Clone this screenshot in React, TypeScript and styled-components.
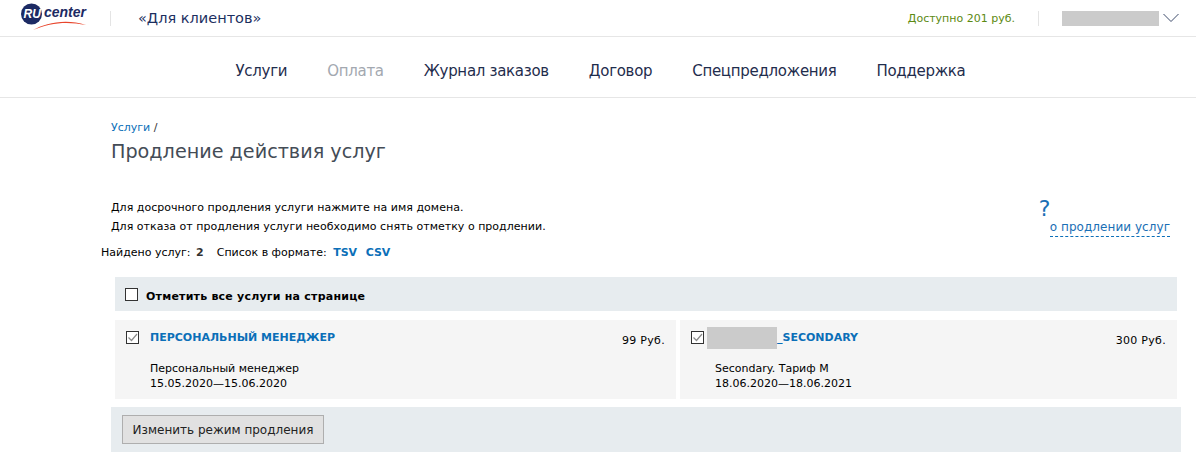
import * as React from 'react'
import styled, { createGlobalStyle } from 'styled-components'

const GlobalStyle = createGlobalStyle`
  html, body {
    margin: 0;
    padding: 0;
    background: #fff;
    font-family: "DejaVu Sans", Verdana, sans-serif;
    color: #000;
  }
  a {
    text-decoration: none;
    color: #0b6fb8;
  }
`

const TopBar = styled.header`
  display: flex;
  align-items: center;
  height: 36px;
  border-bottom: 1px solid #e6e6e6;
  padding: 0 17px 0 20px;
`
const LogoWrap = styled.div`
  display: flex;
  width: 90px;
  height: 32px;
  flex: none;
`
const Divider = styled.span`
  width: 1px;
  height: 15px;
  background: #e4e4e4;
  flex: none;
`
const ClientTitle = styled.div`
  margin-left: 27px;
  font-size: 14.5px;
  color: #1c2f5f;
  flex: 1;
`
const Balance = styled.div`
  font-size: 11px;
  color: #5c8a12;
  margin-right: 23px;
`
const Masked = styled.span<{ $w: number; $h: number }>`
  display: inline-block;
  width: ${(p) => p.$w}px;
  height: ${(p) => p.$h}px;
  background: #cbcbcb;
  flex: none;
`
const UserBox = styled.div`
  display: flex;
  align-items: center;
  margin-left: 23px;
  gap: 4px;
`
const Nav = styled.nav`
  display: flex;
  box-sizing: border-box;
  justify-content: center;
  align-items: center;
  gap: 40px;
  height: 61px;
  border-bottom: 1px solid #e6e6e6;
  padding: 8px 0 0 5px;
`
const NavItem = styled.a<{ $muted?: boolean }>`
  font-size: 15px;
  letter-spacing: -0.3px;
  color: ${(p) => (p.$muted ? '#a3a8b0' : '#1f2d4d')};
`
const Main = styled.main`
  margin: 0 15px 0 111px;
  padding-top: 23px;
`
const Crumbs = styled.div`
  font-size: 11px;
  line-height: 13px;
  color: #333;
`
const PageTitle = styled.h1`
  margin: 6px 0 0;
  font-size: 19.2px;
  line-height: 24px;
  font-weight: 400;
  color: #444c56;
`
const IntroRow = styled.div`
  display: flex;
  justify-content: space-between;
  align-items: flex-start;
  margin-top: 34px;
`
const IntroText = styled.p`
  margin: 0;
  font-size: 11px;
  line-height: 19px;
  letter-spacing: 0.02px;
`
const Help = styled.div`
  display: flex;
  flex-direction: column;
  align-items: flex-start;
  margin: 0 11px 0 0;
`
const HelpMark = styled.span`
  font-size: 22px;
  line-height: 22px;
  color: #1a6fb5;
  margin-left: -11px;
`
const HelpLink = styled.a`
  font-size: 12px;
  line-height: 15px;
  letter-spacing: 0.05px;
  padding-bottom: 1px;
  border-bottom: 1px dashed #0b6fb8;
  color: #1a6fb5;
`
const FoundRow = styled.div`
  display: flex;
  margin: 0 0 0 -10px;
  font-size: 11px;
  line-height: 14px;
  padding-top: 9px;
  gap: 13px;
  b {
    color: #333;
    margin-left: 2px;
  }
`
const FormatLinks = styled.span`
  a {
    font-weight: 700;
    margin-left: 5px;
  }
  a:first-of-type {
    margin-left: 3px;
  }
`
const List = styled.section`
  margin: 0 4px;
  padding-top: 17px;
`
const CheckAll = styled.div`
  display: flex;
  align-items: center;
  gap: 8px;
  height: 34px;
  padding-left: 10px;
  background: #e7ecef;
  font-size: 11px;
  font-weight: 700;
  letter-spacing: 0.22px;
`
const CheckAllLabel = styled.span`
  padding-top: 4px;
`
const Box = styled.span`
  display: flex;
  align-items: center;
  justify-content: center;
  box-sizing: border-box;
  flex: none;
  width: 13px;
  height: 13px;
  border: 1px solid #333;
  background: #fff;
`
const Cards = styled.div`
  display: grid;
  grid-template-columns: 561px 497px;
  gap: 4px;
  margin-top: 9px;
`
const Card = styled.article`
  display: grid;
  grid-template-columns: 35px 1fr auto;
  height: 79px;
  background: #f5f5f5;
  padding-right: 11px;
`
const CardCheck = styled.div`
  padding: 11px 0 0 11px;
`
const CardBody = styled.div`
  padding-top: 11px;
`
const ServiceName = styled.a`
  display: flex;
  align-items: center;
  font-size: 11px;
  line-height: 14px;
  font-weight: 700;
`
const ServiceInfo = styled.div`
  margin-top: 16px;
  font-size: 11px;
  line-height: 15px;
`
const Price = styled.div`
  font-size: 11px;
  line-height: 14px;
  padding-top: 14px;
  letter-spacing: 0.3px;
`
const MaskedName = styled(Masked)`
  margin: -11px 0 -11px -8px;
`
const ActionBar = styled.div`
  display: flex;
  align-items: center;
  height: 45px;
  margin-top: 8px;
  padding-left: 11px;
  background: #e7ecef;
`
const ActionButton = styled.button`
  height: 29px;
  width: 202px;
  padding: 0;
  border: 1px solid #aeaeae;
  background: #e1e1e1;
  font-family: inherit;
  font-size: 12px;
  color: #222;
`

const Logo = () => (
  <LogoWrap>
    <svg width="90" height="32" viewBox="0 0 90 32">
      <circle cx="11.5" cy="12" r="10.5" fill="#1c2a63" />
      <text x="3.5" y="16" fontFamily="Liberation Sans" fontStyle="italic" fontWeight="700" fontSize="12" fill="#fff">
        RU
      </text>
      <text x="24" y="15" fontFamily="Liberation Sans" fontStyle="italic" fontWeight="700" fontSize="14" fill="#1c2a63">
        center
      </text>
      <path d="M13 28C25 21 46 16 66 23C46 19 30 21 13 28Z" fill="#e8452c" />
    </svg>
  </LogoWrap>
)

const Chevron = () => (
  <svg width="16" height="10" viewBox="0 0 16 10">
    <path d="M.5 1L8 8.5L15.5 1" fill="none" stroke="#3d4a6b" strokeWidth="1" />
  </svg>
)

const Check = () => (
  <svg width="11" height="11" viewBox="0 0 11 11">
    <path d="M1.5 5.5L4.5 8.5L10 2" fill="none" stroke="#8a8a8a" strokeWidth="1.2" />
  </svg>
)

const App = () => (
  <>
    <GlobalStyle />
    <TopBar>
      <Logo />
      <Divider />
      <ClientTitle>«Для клиентов»</ClientTitle>
      <Balance>Доступно 201 руб.</Balance>
      <Divider />
      <UserBox>
        <Masked $w={97} $h={15} />
        <Chevron />
      </UserBox>
    </TopBar>
    <Nav>
      <NavItem>Услуги</NavItem>
      <NavItem $muted>Оплата</NavItem>
      <NavItem>Журнал заказов</NavItem>
      <NavItem>Договор</NavItem>
      <NavItem>Спецпредложения</NavItem>
      <NavItem>Поддержка</NavItem>
    </Nav>
    <Main>
      <Crumbs>
        <a>Услуги</a> /
      </Crumbs>
      <PageTitle>Продление действия услуг</PageTitle>
      <IntroRow>
        <IntroText>
          Для досрочного продления услуги нажмите на имя домена.
          <br />
          Для отказа от продления услуги необходимо снять отметку о продлении.
        </IntroText>
        <Help>
          <HelpMark>?</HelpMark>
          <HelpLink>о продлении услуг</HelpLink>
        </Help>
      </IntroRow>
      <FoundRow>
        <span>
          Найдено услуг: <b>2</b>
        </span>
        <FormatLinks>
          Список в формате: <a>TSV</a> <a>CSV</a>
        </FormatLinks>
      </FoundRow>
      <List>
        <CheckAll>
          <Box />
          <CheckAllLabel>Отметить все услуги на странице</CheckAllLabel>
        </CheckAll>
        <Cards>
          <Card>
            <CardCheck>
              <Box>
                <Check />
              </Box>
            </CardCheck>
            <CardBody>
              <ServiceName>ПЕРСОНАЛЬНЫЙ МЕНЕДЖЕР</ServiceName>
              <ServiceInfo>
                Персональный менеджер
                <br />
                15.05.2020—15.06.2020
              </ServiceInfo>
            </CardBody>
            <Price>99 Руб.</Price>
          </Card>
          <Card>
            <CardCheck>
              <Box>
                <Check />
              </Box>
            </CardCheck>
            <CardBody>
              <ServiceName>
                <MaskedName $w={70} $h={22} />
                _SECONDARY
              </ServiceName>
              <ServiceInfo>
                Secondary. Тариф М
                <br />
                18.06.2020—18.06.2021
              </ServiceInfo>
            </CardBody>
            <Price>300 Руб.</Price>
          </Card>
        </Cards>
      </List>
      <ActionBar>
        <ActionButton>Изменить режим продления</ActionButton>
      </ActionBar>
    </Main>
  </>
)

export default App
